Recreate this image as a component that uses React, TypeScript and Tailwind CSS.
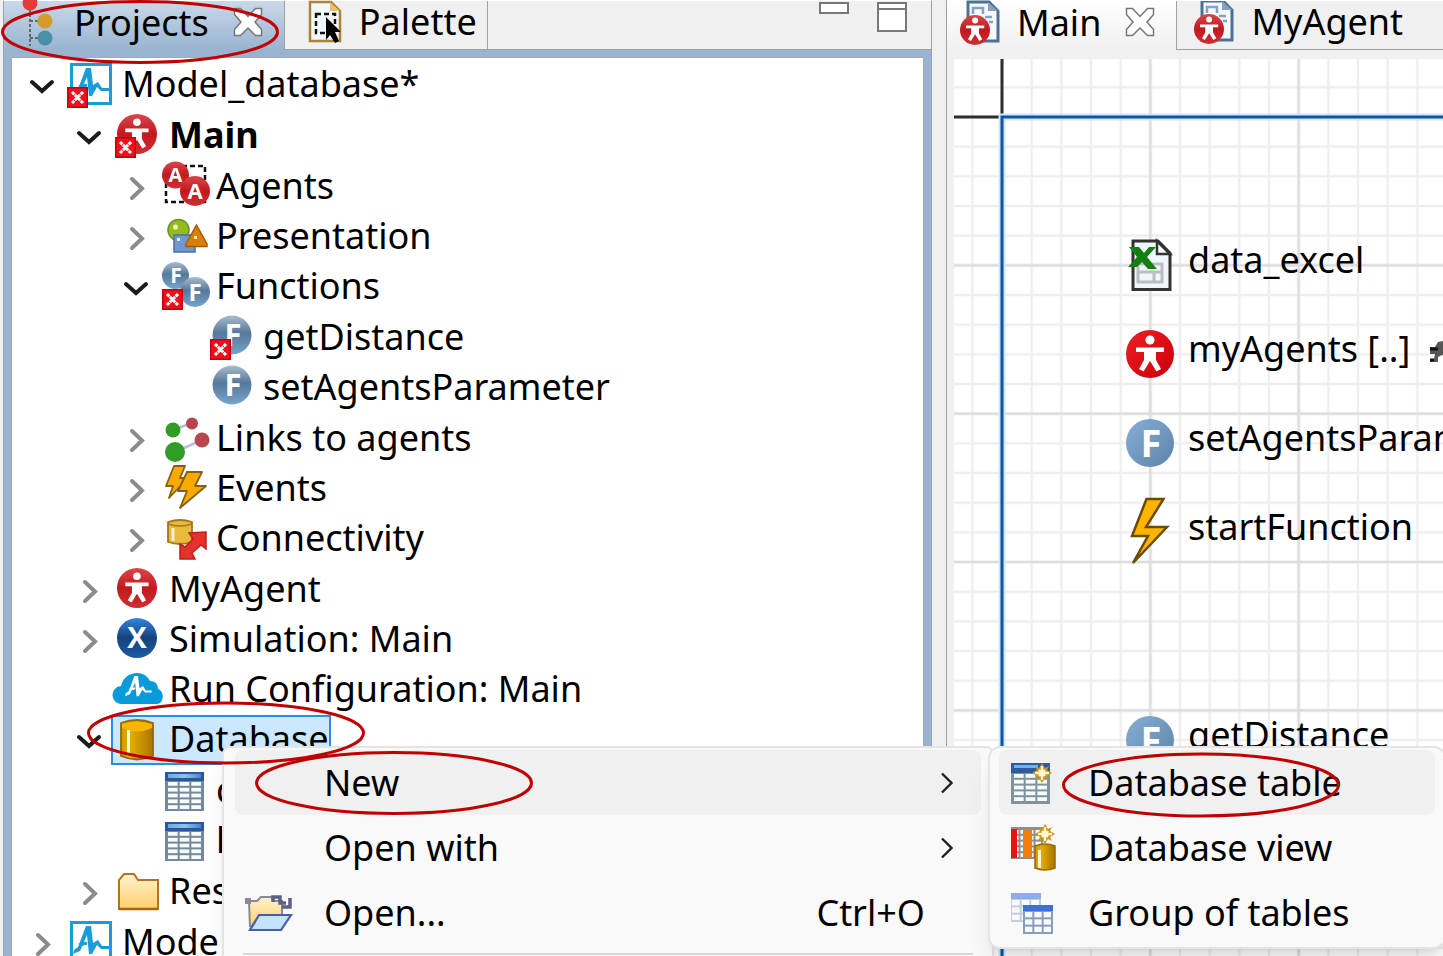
import React from "react";

type IconProps = { children: React.ReactNode; className?: string };

const Icon = ({ children, className = "size-12" }: IconProps) => (
  <svg viewBox="0 0 48 48" className={`${className} shrink-0 overflow-visible`} aria-hidden="true">
    {children}
  </svg>
);

/* ---------- shared gradients ---------- */
const Gradients = () => (
  <svg className="absolute size-0" aria-hidden="true">
    <defs>
      <linearGradient id="red" x1="0" y1="0" x2="0" y2="1">
        <stop offset="0" stopColor="#d9474b" />
        <stop offset="0.5" stopColor="#c2181e" />
        <stop offset="1" stopColor="#cf2f33" />
      </linearGradient>
      <linearGradient id="flatRed" x1="0" y1="0" x2="1" y2="1">
        <stop offset="0" stopColor="#ee2026" />
        <stop offset="1" stopColor="#c80006" />
      </linearGradient>
      <linearGradient id="steel" x1="0" y1="0" x2="0" y2="1">
        <stop offset="0" stopColor="#a9bccf" />
        <stop offset="0.45" stopColor="#56789a" />
        <stop offset="1" stopColor="#76a5cb" />
      </linearGradient>
      <linearGradient id="flatSteel" x1="0" y1="0" x2="1" y2="1">
        <stop offset="0" stopColor="#87aed6" />
        <stop offset="1" stopColor="#5d84a6" />
      </linearGradient>
      <linearGradient id="blue" x1="0" y1="0" x2="0" y2="1">
        <stop offset="0" stopColor="#2f86e0" />
        <stop offset="0.5" stopColor="#16427c" />
        <stop offset="1" stopColor="#1d5ba6" />
      </linearGradient>
      <linearGradient id="gold" x1="0" y1="0" x2="1" y2="0">
        <stop offset="0" stopColor="#d39a00" />
        <stop offset="0.3" stopColor="#e5ad00" />
        <stop offset="1" stopColor="#a87400" />
      </linearGradient>
      <linearGradient id="folder" x1="0" y1="0" x2="0" y2="1">
        <stop offset="0" stopColor="#fff3cf" />
        <stop offset="1" stopColor="#ffcf6b" />
      </linearGradient>
      <linearGradient id="head" x1="0" y1="0" x2="1" y2="0">
        <stop offset="0" stopColor="#6ea9dd" />
        <stop offset="0.5" stopColor="#86c4f2" />
        <stop offset="1" stopColor="#4f86c6" />
      </linearGradient>
    </defs>
  </svg>
);

/* ---------- icon parts ---------- */
const ErrorBadge = ({ x = 2, y = 26 }) => (
  <g transform={`translate(${x} ${y})`}>
    <rect width="21" height="21" fill="#c4000c" />
    <rect x="1.5" y="1.5" width="18" height="18" fill="#f0101c" />
    <path d="M5 5l11 11M16 5L5 16" stroke="#fff" strokeWidth="3" strokeDasharray="3.4 0.7" />
  </g>
);

const Person = () => (
  <g fill="#fff">
    <circle cx="24" cy="10" r="4.6" />
    <path d="M10 17.5h28v4.5h-8v8l5 9-4.500 2.500L24 31l-6.500 10.500L13 39l5-9v-8h-8z" />
  </g>
);

const Letter = ({ x, y, size, children }: { x: number; y: number; size: number; children: string }) => (
  <text x={x} y={y} fontSize={size} fontWeight="700" fill="#fff" textAnchor="middle" fontFamily="Open Sans, sans-serif">
    {children}
  </text>
);

const Star = ({ x, y }: { x: number; y: number }) => (
  <g transform={`translate(${x} ${y})`}>
    <path d="M0-10l3 5 4-2-2 4 5 3-5 3 2 4-4-2-3 5-3-5-4 2 2-4-5-3 5-3-2-4 4 2z" fill="#c99412" />
    <path d="M0-7v14M-7 0H7M-3-3l6 6M3-3l-6 6" stroke="#fff7d6" strokeWidth="2.400" />
  </g>
);

const Cells = ({ x, y, w, h, cols, rows }: { x: number; y: number; w: number; h: number; cols: number; rows: number }) => (
  <g fill="#f7fbfc">
    {Array.from({ length: cols * rows }, (_, i) => {
      const cw = (w - (cols - 1) * 2) / cols;
      const ch = (h - (rows - 1) * 2) / rows;
      return <rect key={i} x={x + (i % cols) * (cw + 2)} y={y + Math.floor(i / cols) * (ch + 2)} width={cw} height={ch} />;
    })}
  </g>
);

const Pulse = ({ color }: { color: string }) => (
  <g>
    <path d="M20 7h5l2 17 5-3 4 6h8v3h-9l-4-4-5 9h-3l-2-19-7 16-7 3 1-4 4-3z" fill={color} />
    <path d="M13 26l8-2" stroke={color} strokeWidth="3" />
  </g>
);

/* ---------- tree icons ---------- */
const ModelIcon = ({ error }: { error?: boolean }) => (
  <Icon>
    <rect x="5.500" y="3.500" width="39" height="39" fill="#fff" stroke="#1a9cd8" strokeWidth="3" />
    <Pulse color="#1a9cd8" />
    {error && <ErrorBadge x={1} y={26} />}
  </Icon>
);

const AgentIcon = ({ error }: { error?: boolean }) => (
  <Icon>
    <circle cx="24" cy="22" r="20" fill="url(#red)" />
    <g transform="translate(4 2) scale(0.83)">
      <Person />
    </g>
    {error && <ErrorBadge x={2} y={25} />}
  </Icon>
);

const AgentsIcon = () => (
  <Icon>
    <rect x="6" y="3" width="39" height="36" fill="none" stroke="#111" strokeWidth="2.500" strokeDasharray="5 3" />
    <circle cx="15.500" cy="12" r="13.500" fill="url(#red)" />
    <Letter x={15.5} y={19} size={20}>A</Letter>
    <circle cx="35" cy="28" r="15" fill="url(#red)" />
    <Letter x={35} y={36} size={22}>A</Letter>
  </Icon>
);

const PresentationIcon = () => (
  <Icon>
    <circle cx="18.500" cy="17" r="10.500" fill="#94bd1c" stroke="#6f8f2a" strokeWidth="1.500" />
    <circle cx="15.500" cy="14" r="2.500" fill="#eef8c4" />
    <rect x="14" y="22" width="21" height="17" fill="#6f98d0" stroke="#4a6fa6" strokeWidth="1.500" />
    <rect x="17" y="25" width="3" height="3" fill="#e2edfb" />
    <path d="M36.500 12L47 31v2.500H26V31z" fill="#d97f06" stroke="#a65c00" strokeWidth="1.500" />
    <rect x="34" y="23" width="3" height="3" fill="#ffe7b8" />
  </Icon>
);

const FunctionsIcon = () => (
  <Icon>
    <circle cx="15.500" cy="12.500" r="13.500" fill="url(#steel)" />
    <Letter x={16} y={20} size={21}>F</Letter>
    <circle cx="35" cy="29" r="15" fill="url(#steel)" />
    <Letter x={35} y={38} size={24}>F</Letter>
    <ErrorBadge x={2} y={26} />
  </Icon>
);

const FunctionIcon = ({ error }: { error?: boolean }) => (
  <Icon>
    <circle cx="25" cy="21" r="19.500" fill="url(#steel)" />
    <Letter x={26} y={32} size={31}>F</Letter>
    {error && <ErrorBadge x={3} y={25} />}
  </Icon>
);

const LinksIcon = () => (
  <Icon>
    <path d="M13 15L32 8M15 37l27-12" stroke="#b9bdd6" strokeWidth="2.500" />
    <circle cx="13" cy="15" r="7.500" fill="#2f9d26" />
    <circle cx="15" cy="37" r="10" fill="#2f9d26" />
    <circle cx="32" cy="8.500" r="6" fill="#b84650" />
    <circle cx="42" cy="25" r="7.500" fill="#b84650" />
  </Icon>
);

const EventsIcon = () => (
  <Icon>
    <g fill="#f7ab00" stroke="#86610c" strokeWidth="1.800" strokeLinejoin="round">
      <path d="M14 1h11l-5 12h8L9 33l4-12H6z" />
      <path d="M27 7h15l-7 14h11L20 43l7-17h-9z" />
    </g>
  </Icon>
);

const ConnectivityIcon = () => (
  <Icon>
    <path d="M8 7q12-4 24 0v20q-12 4-24 0z" fill="#e9b93b" stroke="#a5761c" strokeWidth="1.800" />
    <path d="M8 9q12 4 24 0" fill="none" stroke="#a5761c" strokeWidth="1.500" />
    <path d="M13 13v13" stroke="#fff3c8" strokeWidth="3" />
    <path d="M46 17v17l-5-4-9 8 3 6H20V29l5 3 8-8-4-6z" fill="#e8302b" stroke="#b8211d" strokeWidth="1.500" />
  </Icon>
);

const SimulationIcon = () => (
  <Icon>
    <circle cx="24" cy="22" r="20" fill="url(#blue)" />
    <Letter x={24} y={32} size={29}>X</Letter>
  </Icon>
);

const CloudIcon = () => (
  <Icon>
    <path d="M9 38a9 9 0 0 1-1-18C10 12 16 7 24 7c7 0 11 4 13 8 6 0 8 4 8 8 7 2 6 15-1 15z" fill="#079bdc" />
    <g transform="translate(7 5) scale(0.72)">
      <Pulse color="#fff" />
    </g>
  </Icon>
);

const DatabaseIcon = () => (
  <Icon>
    <path d="M8 7q16-6 32 0v33q-16 7-32 0z" fill="url(#gold)" stroke="#94690a" strokeWidth="1.800" />
    <path d="M9 8q15-5 30 0v4q-15 7-30 0z" fill="#f8b600" />
    <path d="M15.500 14v26" stroke="#fff6d4" strokeWidth="3" />
  </Icon>
);

const TableIcon = () => (
  <Icon>
    <rect x="5" y="5" width="39" height="39" fill="#74899a" />
    <rect x="5" y="5" width="39" height="9" fill="#2a57a0" />
    <rect x="8" y="7" width="33" height="4" fill="url(#head)" />
    <Cells x={8} y={15} w={33} h={27} cols={3} rows={5} />
  </Icon>
);

const FolderIcon = () => (
  <Icon>
    <path d="M6 41V12l5-6h10l4 6h20v29z" fill="url(#folder)" stroke="#b4741d" strokeWidth="2" />
    <path d="M6 41h39" stroke="#a8640d" strokeWidth="2.500" />
  </Icon>
);

/* ---------- menu icons ---------- */
const OpenIcon = () => (
  <Icon>
    <path d="M5 38L4 12h8l4-4h10l3 4h8v18" fill="url(#folder)" stroke="#8b8793" strokeWidth="2" />
    <path d="M0 12h6" stroke="#8b8793" strokeWidth="6" />
    <path d="M28 13V8h7v6h6M45 9v9h-8" fill="none" stroke="#5d6080" strokeWidth="3.500" />
    <path d="M14 26h32L36 41H5z" fill="#c3e2fb" stroke="#4a5cae" strokeWidth="2.200" />
  </Icon>
);

const NewTableIcon = () => (
  <Icon>
    <rect x="2" y="4" width="39" height="41" fill="#7f939f" />
    <rect x="2" y="4" width="39" height="10" fill="#2f5a9d" />
    <rect x="5" y="6" width="24" height="3" fill="#6fb4ec" />
    <Cells x={5} y={15} w={33} h={27} cols={3} rows={5} />
    <Star x={33} y={14} />
  </Icon>
);

const NewViewIcon = () => (
  <Icon>
    <rect x="2" y="3" width="32" height="32" fill="#8e8e8e" />
    <Cells x={4} y={6} w={28} h={27} cols={4} rows={5} />
    <rect x="2" y="5" width="6" height="29" fill="#ea1313" />
    <rect x="14" y="5" width="9" height="29" fill="#f47c0a" />
    <path d="M26 22q10-4 20 0v22q-10 4-20 0z" fill="url(#gold)" stroke="#94690a" strokeWidth="1.500" />
    <path d="M30.500 26v18" stroke="#fff6d4" strokeWidth="3" />
    <Star x={36} y={10} />
  </Icon>
);

const GroupIcon = () => (
  <Icon>
    <rect x="2" y="4" width="30" height="29" fill="#c5cddd" />
    <rect x="2" y="4" width="30" height="6" fill="#8fabe8" />
    <Cells x={3} y={11} w={27} h={20} cols={3} rows={3} />
    <rect x="14" y="16" width="30" height="29" fill="#8a9bbb" />
    <rect x="14" y="16" width="30" height="6" fill="#3f6fd0" />
    <Cells x={16} y={23} w={26} h={20} cols={3} rows={3} />
  </Icon>
);

/* ---------- tab icons ---------- */
const ProjectsIcon = () => (
  <Icon>
    <path d="M10 4v42M10 21h8M10 38h8" stroke="#666" strokeWidth="2" strokeDasharray="3 2" />
    <circle cx="10" cy="3" r="7.500" fill="#e23b39" />
    <circle cx="25" cy="21" r="7.500" fill="#d49a2d" />
    <circle cx="25" cy="38" r="7.500" fill="#4a8faa" />
  </Icon>
);

const PaletteIcon = () => (
  <Icon>
    <path d="M9 3h21l9 9v30H9z" fill="#f2f7fd" stroke="#a98437" strokeWidth="2.500" />
    <path d="M29 3v9h10z" fill="#e7c069" />
    <rect x="15" y="15" width="19" height="19" fill="none" stroke="#111" strokeWidth="2.500" strokeDasharray="5 3" />
    <path d="M25 18l15 15h-6l4 9-4 2-5-8-4 5z" fill="#000" />
  </Icon>
);

const AgentFileIcon = () => (
  <Icon>
    <path d="M9 2h21l9 9v30H9z" fill="#f5f9fd" stroke="#4e7192" strokeWidth="3" />
    <path d="M29 2v9h10z" fill="#86a2bd" />
    <path d="M14 14V8h10v6M26 17h7M30 22h4" fill="none" stroke="#86a2bd" strokeWidth="2.500" />
    <circle cx="16" cy="30" r="15" fill="url(#red)" />
    <g transform="translate(0.500 14) scale(0.65)">
      <Person />
    </g>
  </Icon>
);

const CloseIcon = () => (
  <svg viewBox="0 0 30 30" className="size-[30px]" aria-hidden="true">
    <path
      d="M1.500 1.500h6l7.500 8 7.500-8h6v6L22 15l6.500 7.500v6h-6L15 21l-7.500 7.500h-6v-6L8 15 1.500 7.500z"
      fill="#fff"
      stroke="#777"
      strokeWidth="1.500"
    />
  </svg>
);

/* ---------- project tree ---------- */
const Chevron = ({ open }: { open: boolean }) => (
  <svg viewBox="0 0 24 24" className="size-6 overflow-visible" fill="none" strokeWidth="4" strokeLinecap="round" aria-hidden="true">
    {open ? <path d="M2 9l10 9L22 9" stroke="#1b1b1b" /> : <path d="M8 4l10 9.500L8 23" stroke="#8b8b8b" />}
  </svg>
);

type NodeProps = {
  icon: React.ReactNode;
  label: string;
  state?: "open" | "closed";
  bold?: boolean;
  selected?: boolean;
  children?: React.ReactNode;
};

const TreeNode = ({ icon, label, state, bold, selected, children }: NodeProps) => (
  <li>
    <div className="flex h-[50px] items-center">
      <button className="mr-[10px] flex size-6 shrink-0 items-center" aria-label={`Toggle ${label}`}>
        {state && <Chevron open={state === "open"} />}
      </button>
      <button
        className={`flex h-full items-center gap-2 whitespace-nowrap border-2 ${
          selected ? "border-[#2a8dde] bg-[#cce8ff]" : "border-transparent"
        }`}
      >
        {icon}
        <span className={`pb-0.5 leading-10 ${bold ? "font-bold" : ""}`}>{label}</span>
      </button>
    </div>
    {children && <ul className="py-px pl-[47px]">{children}</ul>}
  </li>
);

const ProjectTree = () => (
  <ul className="min-h-0 flex-1 overflow-hidden border border-[#a9a9a9] bg-white pl-[18px] pt-0.5">
    <TreeNode icon={<ModelIcon error />} label="Model_database*" state="open">
      <TreeNode icon={<AgentIcon error />} label="Main" state="open" bold>
        <TreeNode icon={<AgentsIcon />} label="Agents" state="closed" />
        <TreeNode icon={<PresentationIcon />} label="Presentation" state="closed" />
        <TreeNode icon={<FunctionsIcon />} label="Functions" state="open">
          <TreeNode icon={<FunctionIcon error />} label="getDistance" />
          <TreeNode icon={<FunctionIcon />} label="setAgentsParameter" />
        </TreeNode>
        <TreeNode icon={<LinksIcon />} label="Links to agents" state="closed" />
        <TreeNode icon={<EventsIcon />} label="Events" state="closed" />
        <TreeNode icon={<ConnectivityIcon />} label="Connectivity" state="closed" />
      </TreeNode>
      <TreeNode icon={<AgentIcon />} label="MyAgent" state="closed" />
      <TreeNode icon={<SimulationIcon />} label="Simulation: Main" state="closed" />
      <TreeNode icon={<CloudIcon />} label="Run Configuration: Main" />
      <TreeNode icon={<DatabaseIcon />} label="Database" state="open" selected>
        <TreeNode icon={<TableIcon />} label="c" />
        <TreeNode icon={<TableIcon />} label="l" />
      </TreeNode>
      <TreeNode icon={<FolderIcon />} label="Res" state="closed" />
    </TreeNode>
    <TreeNode icon={<ModelIcon />} label="Mode" state="closed" />
  </ul>
);

const ProjectsPanel = () => (
  <section className="flex min-w-0 flex-col pl-[3px] pr-[14px]">
    <div className="flex h-[50px] shrink-0 border-x border-t border-x-[#a0a0a0] border-t-white">
      <div className="flex items-center bg-linear-to-b from-[#c9d8e9] to-[#99b4d1] pb-1 pl-4 pr-[21px]">
        <ProjectsIcon />
        <button className="ml-1.5 pb-0.5 leading-10">Projects</button>
        <button className="mb-1 ml-6" aria-label="Close Projects">
          <CloseIcon />
        </button>
      </div>
      <div className="flex items-center border-x border-b border-[#a0a0a0] pb-1 pl-4 pr-2.5">
        <PaletteIcon />
        <button className="ml-2.5 pb-0.5 leading-10">Palette</button>
      </div>
      <div className="flex flex-1 items-start justify-end gap-7 border-b border-[#a0a0a0] pr-6 pt-px">
        <button className="h-3 w-[30px] border-2 border-[#787878] bg-white" aria-label="Minimize" />
        <button className="h-[30px] w-[30px] border-2 border-[#787878] bg-white" aria-label="Maximize">
          <span className="mb-5 block h-1.5 border-b-2 border-[#787878]" />
        </button>
      </div>
    </div>
    <div className="flex min-h-0 flex-1 flex-col border-x border-[#a0a0a0] bg-[#99b4d1] px-[7px] pt-[7px]">
      <ProjectTree />
    </div>
  </section>
);

/* ---------- diagram canvas ---------- */
const Grid = () => (
  <svg className="absolute inset-0 size-full" aria-hidden="true">
    <defs>
      <pattern id="minor" x="48" y="58" width="29.67" height="29.67" patternUnits="userSpaceOnUse">
        <path d="M0 0v29.670M0 0h29.670M29.670 0v29.670M0 29.670h29.670" stroke="#eeeeee" strokeWidth="2.400" />
      </pattern>
      <pattern id="major" x="48" y="58" width="148.35" height="148.35" patternUnits="userSpaceOnUse">
        <path d="M0 0v148.350M0 0h148.350M148.350 0v148.350M0 148.350h148.350" stroke="#dddddd" strokeWidth="2.600" />
      </pattern>
    </defs>
    <rect width="100%" height="100%" fill="url(#minor)" />
    <rect width="100%" height="100%" fill="url(#major)" />
    <path d="M48 0v58M0 58h48" stroke="#2e2e2e" strokeWidth="3" />
    <path d="M48 1200V58h2000" fill="none" stroke="#d5e6f5" strokeWidth="7" />
    <path d="M48 1200V58h2000" fill="none" stroke="#0a55a5" strokeWidth="3" />
  </svg>
);

const CanvasFunction = () => (
  <Icon>
    <circle cx="24" cy="24" r="24" fill="url(#flatSteel)" />
    <Letter x={25} y={38} size={38}>F</Letter>
  </Icon>
);

const elements = [
  {
    label: "data_excel",
    place: "top-[182px]",
    icon: (
      <Icon>
        <path d="M7 0h25l12 12v36.500H7z" fill="#eef7fc" stroke="#333" strokeWidth="3" />
        <path d="M31 0v13h13z" fill="#fff" stroke="#333" strokeWidth="2.500" />
        <path d="M12 23h24v18H12zM12 31h24M28 31v10" fill="none" stroke="#bdbdbd" strokeWidth="3" />
        <path d="M3 6h10l5 6 5-6h7l-9 10 10 12h-9l-6-7-5 5H2l9-10z" fill="#118011" />
      </Icon>
    ),
  },
  {
    label: "myAgents [..]",
    place: "top-[271px]",
    icon: (
      <Icon>
        <circle cx="24" cy="24" r="24" fill="url(#flatRed)" />
        <Person />
      </Icon>
    ),
  },
  { label: "setAgentsParameter", place: "top-[360px]", icon: <CanvasFunction /> },
  {
    label: "startFunction",
    place: "top-[449px]",
    icon: (
      <Icon>
        <path d="M20.500-9h17L20 19h21L7 55l15-27H6z" fill="#ffb400" stroke="#6b4c00" strokeWidth="2.500" />
      </Icon>
    ),
  },
  { label: "getDistance", place: "top-[657px]", icon: <CanvasFunction /> },
];

const EditorPanel = () => (
  <section className="flex min-w-0 flex-col border-l border-[#a0a0a0]">
    <div className="flex h-[50px] shrink-0 border-t border-white">
      <div className="flex items-center bg-linear-to-b from-white to-[#f0f0f0] pb-1 pl-3 pr-[21px]">
        <AgentFileIcon />
        <button className="ml-2.5 pb-0.5 leading-10">Main</button>
        <button className="mb-1 ml-6" aria-label="Close Main">
          <CloseIcon />
        </button>
      </div>
      <div className="flex flex-1 items-center overflow-hidden border-b border-l border-[#a0a0a0] pb-1 pl-4">
        <AgentFileIcon />
        <button className="ml-2.5 pb-0.5 leading-10">MyAgent</button>
      </div>
    </div>
    <div className="relative ml-[7px] mt-[9px] min-h-0 flex-1 overflow-hidden bg-white">
      <Grid />
      {elements.map((el) => (
        <div key={el.label} className={`absolute left-[172px] flex gap-3.5 whitespace-nowrap ${el.place}`}>
          {el.icon}
          <span className="leading-[38px]">{el.label}</span>
          {el.label.startsWith("myAgents") && (
            <svg viewBox="0 0 20 24" className="ml-1.5 mt-2.5 h-6 w-5" aria-hidden="true">
              <path d="M0 7h5l3-5 10-2v16l-6-1-4 2v5H0v-3h4l1-5H0z" fill="#555" />
              <path d="M0 9h8M0 20h4" stroke="#111" strokeWidth="3" />
            </svg>
          )}
        </div>
      ))}
    </div>
  </section>
);

/* ---------- context menus ---------- */
type ItemProps = { label: string; icon?: React.ReactNode; shortcut?: string; more?: boolean; active?: boolean };

const MenuItem = ({ label, icon, shortcut, more, active }: ItemProps) => (
  <button
    role="menuitem"
    className={`flex h-[65px] w-full items-center gap-[31px] rounded-lg pl-[10px] text-left ${active ? "bg-[#f0f0f0]" : ""}`}
  >
    <span className="size-12 shrink-0">{icon}</span>
    <span className="flex-1 whitespace-nowrap leading-10">{label}</span>
    {shortcut && <span className="mr-14 leading-10">{shortcut}</span>}
    {more && (
      <svg viewBox="0 0 12 22" className="mr-7 h-[22px] w-3" fill="none" aria-hidden="true">
        <path d="M1 1.500l9.500 9.500L1 20.500" stroke="#222" strokeWidth="2.400" />
      </svg>
    )}
  </button>
);

const ContextMenu = () => (
  <div
    role="menu"
    className="absolute left-[222px] top-[746px] w-[772px] rounded-t-lg border-2 border-[#e4e4e4] bg-[#f9f9f9] px-[11px] pb-8 pt-0.5 shadow-xl"
  >
    <MenuItem label="New" more active />
    <MenuItem label="Open with" more />
    <MenuItem label="Open..." icon={<OpenIcon />} shortcut="Ctrl+O" />
    <hr className="mx-2 mt-2 border-t-2 border-[#d7d7d7]" />
  </div>
);

const NewSubmenu = () => (
  <div
    role="menu"
    className="absolute left-[988px] top-[746px] w-[458px] rounded-xl border-2 border-[#e4e4e4] bg-[#f9f9f9] px-[9px] py-0.5 shadow-xl"
  >
    <MenuItem label="Database table" icon={<NewTableIcon />} active />
    <MenuItem label="Database view" icon={<NewViewIcon />} />
    <MenuItem label="Group of tables" icon={<GroupIcon />} />
  </div>
);

// hand drawn red rings that lead through the clicks
const Rings = () => (
  <svg className="pointer-events-none absolute inset-0 size-full" fill="none" stroke="#c00000" strokeWidth="3" aria-hidden="true">
    <ellipse cx="140" cy="32" rx="137.500" ry="30.500" />
    <ellipse cx="226" cy="733" rx="137.500" ry="30" />
    <ellipse cx="394" cy="783" rx="137.500" ry="30.500" />
    <ellipse cx="1201" cy="785" rx="137.500" ry="31" />
  </svg>
);

const App = () => {
  return (
    <div className="relative h-screen overflow-hidden bg-[#f0f0f0] font-['Noto_Sans',sans-serif] text-[36px] text-black">
      <Gradients />
      <main className="grid h-full grid-cols-[minmax(0,946fr)_minmax(0,497fr)]">
        <ProjectsPanel />
        <EditorPanel />
      </main>
      <ContextMenu />
      <NewSubmenu />
      <Rings />
    </div>
  );
};

export default App;
